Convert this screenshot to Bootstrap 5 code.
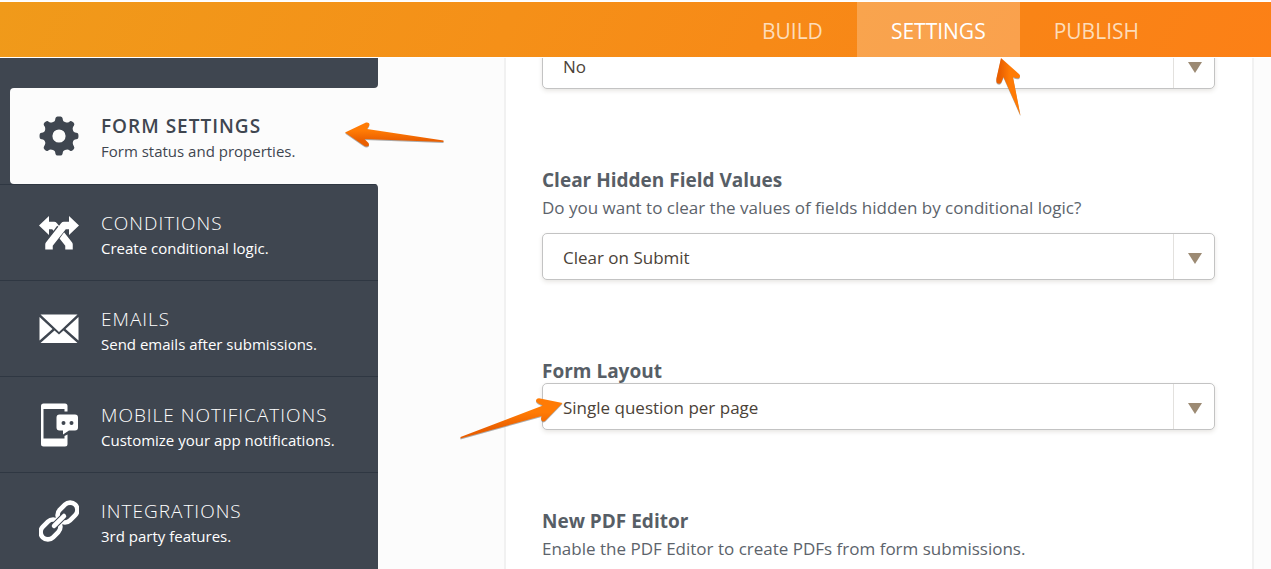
<!DOCTYPE html>
<html lang="en">
<head>
<meta charset="utf-8">
<meta name="viewport" content="width=device-width, initial-scale=1">
<title>Form Settings</title>
<link href="https://cdn.jsdelivr.net/npm/bootstrap@5.3.0/dist/css/bootstrap.min.css" rel="stylesheet">
<style>
:root { --slate: #3f4650; --paper: #fcfcfc; }
body { font-family: "Open Sans", "Noto Sans", sans-serif; background: var(--paper); overflow: hidden; }
.topbar { margin-top: 2px; height: 55px; padding-right: 98px; background: linear-gradient(115deg, #f09a1a, #f59018 40%, #f98416 80%, #fc8016); box-shadow: 0 0 0 1px #fff; z-index: 5; }
.tab-link { padding: 4px 34px 0; font-size: 21px; line-height: 51px; color: #fddcb9; text-decoration: none; white-space: nowrap; }
.tab-link.active { color: #fff; background: rgba(255,255,255,.24); }
.page-row { margin-top: 1px; height: calc(100vh - 58px); }
.side { width: 378px; }
.side-cap { height: 30px; background: var(--slate); border-bottom-right-radius: 4px; }
.side-current { background: linear-gradient(90deg, var(--slate) 50%, var(--paper) 50%); padding-left: 10px; }
.side-rest { background: var(--slate); border-top-right-radius: 4px; overflow: hidden; }
.side-item { height: 96px; padding-left: 39px; gap: 22px; color: #fff; text-decoration: none; border-top: 1px solid #2f3742; }
.side-item svg { flex: none; width: 40px; }
.side-current .side-item { padding-left: 29px; color: var(--slate); background: var(--paper); border: 0; border-radius: 4px 0 0 4px; }
.item-title { font-size: 19px; line-height: 26px; font-weight: 300; letter-spacing: 1px; text-transform: uppercase; }
.side-current .item-title { font-weight: 600; }
.item-note { font-size: 15px; line-height: 24px; }
.side-text { white-space: nowrap; padding-top: 4px; }
.main-area { padding: 0 17px 0 126px; }
.panel { border: solid #f1f1f1; border-width: 0 2px; background: #fff; padding: 0 37px 0 36px; margin-top: -16px; min-height: calc(100% + 16px); }
.field { margin-bottom: 79px; }
.field:last-child { margin-bottom: 0; }
.field-label { display: block; font-size: 19px; line-height: 24px; font-weight: 700; color: #575e66; }
.field-note { font-size: 17px; line-height: 28px; color: #5c636b; margin: 2px 0 11px; }
.field-note:last-child { margin-bottom: 0; }
.picker { height: 47px; padding: 2px 60px 0 20px; font-size: 17px; color: #4b4238; border: 1px solid #c3c3c3; border-radius: 5px; box-shadow: 0 2px 4px rgba(90,80,60,.14);
  background: url("data:image/svg+xml,%3Csvg xmlns='http://www.w3.org/2000/svg' width='41' height='45'%3E%3Cpath d='M.5 0V45' stroke='%23e3e1de'/%3E%3Cpath d='M15 19H29L22 30Z' fill='%239c8a73'/%3E%3C/svg%3E") right center / 41px 45px no-repeat #fff; }
.pointer { position: absolute; overflow: visible; pointer-events: none; z-index: 6; filter: drop-shadow(0 1px 0 #77777799); }
.pointer-side { left: 345px; top: 34px; }
.pointer-tab { right: -1px; top: 56px; }
.pointer-field { left: -82px; bottom: -9px; }
</style>
</head>
<body>
<svg width="0" height="0" class="position-absolute" aria-hidden="true">
  <defs><linearGradient id="flame" x1="0" y1="0" x2="0" y2="1"><stop offset=".35" stop-color="#ff7b05"/><stop offset=".75" stop-color="#ea5f00"/></linearGradient>
  <linearGradient id="flame-across" x1="0" y1="0" x2="1" y2="0"><stop offset=".15" stop-color="#ea5f00"/><stop offset=".55" stop-color="#ff7b05"/></linearGradient></defs>
</svg>
<header class="topbar position-relative">
  <nav class="d-flex justify-content-end" aria-label="Form">
    <a class="tab-link" href="#build">BUILD</a>
    <a class="tab-link active position-relative" href="#settings" aria-current="page">SETTINGS
      <svg class="pointer pointer-tab" width="25" height="58" aria-hidden="true"><path d="M5 0L23 16Q25 18 23 20Q21 21 17 19L24.500 57.500L7.500 19L5.500 24Q4 27 1 25Q0 24 .5 20Z" fill="url(#flame-across)"/></svg>
    </a>
    <a class="tab-link" href="#publish">PUBLISH</a>
  </nav>
</header>
<div class="page-row d-flex">
  <nav class="side d-flex flex-column flex-shrink-0" aria-label="Settings">
    <div class="side-cap flex-shrink-0"></div>
    <div class="side-current position-relative">
      <a class="side-item d-flex align-items-center" href="#form" aria-current="page">
        <svg viewBox="0 0 40 40" height="40" fill="currentColor" aria-hidden="true"><path fill-rule="evenodd" d="M16.500 2Q17 .5 18.500 .5H21.500Q23 .5 23.500 2L24 4.500Q24.500 5.500 26 6Q28.500 7 30 6L31.500 5Q32.500 4.500 34.500 6.500Q36 8 35 9.500L34 11Q33.300 12.500 34 14.500Q34.500 16 36 16.500L38.500 17Q39.500 17.500 39.500 20T38.500 23L36 23.500Q34.500 24 34 25.500T34 28.500L35 30.500Q36 32 34.500 33.500Q32.500 35.500 31.500 35L29.500 33.700Q28 33 26 34Q24.500 34.500 24 35.500L23.500 38Q23 39.500 21.500 39.500H18.500Q17 39.500 16.500 38L16 35.500Q15.500 34.500 14 34Q12 33 10.500 33.700L8.500 35Q7.500 35.500 5.500 33.500Q4 32 5 30.500L6 28.500Q6.700 27 6 25.500T4 23.500L1.500 23Q.5 22.500 .5 20T1.500 17L4 16.500Q5.500 16 6 14.500T6 11L5 9.500Q4 8 5.500 6.500Q7.500 4.500 8.500 5L10.500 6.300Q12 7 14 6Q15.500 5.500 16 4.500ZM20 13.400A6.600 6.600 0 1 0 20 26.600A6.600 6.600 0 1 0 20 13.400Z"/></svg>
        <span class="side-text"><span class="item-title d-block">Form Settings</span><span class="item-note d-block">Form status and properties.</span></span>
      </a>
      <svg class="pointer pointer-side" width="99" height="25" aria-hidden="true"><path d="M0 10.500L21 .5Q24 0 24.500 2Q24.500 4 22 7L98.500 18.500V20L19.500 17L23.500 21Q25 24 22 24.500Q20 24.500 18 23Z" fill="url(#flame)"/></svg>
    </div>
    <div class="side-rest flex-grow-1">
      <a class="side-item d-flex align-items-center" href="#conditions">
        <svg viewBox="0 0 40 34" height="34" fill="none" stroke="currentColor" stroke-width="7.500" stroke-linejoin="round" aria-hidden="true"><path d="M9 9.500H15L30 28.500V33.500"/><path d="M14 23.500L22 12.500" stroke="#3f4650" stroke-width="9.500"/><path d="M10 33.500V28.500L25 9.500H31"/><path d="M0 9.500L10 0V19ZM40 9.500L30 0V19Z" fill="currentColor" stroke="none"/></svg>
        <span class="side-text"><span class="item-title d-block">Conditions</span><span class="item-note d-block">Create conditional logic.</span></span>
      </a>
      <a class="side-item d-flex align-items-center" href="#emails">
        <svg viewBox="0 0 40 30" height="30" fill="currentColor" aria-hidden="true"><path d="M1.500 .5H38.500L20 18ZM.5 3L13.500 15L.5 26.500ZM39.500 3L26.500 15L39.500 26.500ZM15.500 16.500L20 20.500L24.500 16.500L38.500 29H1.500Z"/></svg>
        <span class="side-text"><span class="item-title d-block">Emails</span><span class="item-note d-block">Send emails after submissions.</span></span>
      </a>
      <a class="side-item d-flex align-items-center" href="#mobile">
        <svg viewBox="0 0 40 44" height="44" fill="currentColor" aria-hidden="true"><path fill-rule="evenodd" d="M4.500 .5H26Q28.500 .5 28.500 3V8.500H25.500V6H4.500V35.500H25.500V33L28.500 31.500V41Q28.500 43.500 26 43.500H4.500Q2 43.500 2 41V3Q2 .5 4.500 .5Z"/><path fill-rule="evenodd" d="M20.500 11.500H36Q39 11.500 39 14.500V24.500Q39 27.500 36 27.500H30L24 31.500V27.500H20.500Q17.500 27.500 17.500 24.500V14.500Q17.500 11.500 20.500 11.500ZM24.500 18A2 2 0 1 0 24.500 22A2 2 0 1 0 24.500 18ZM32.500 18A2 2 0 1 0 32.500 22A2 2 0 1 0 32.500 18Z"/></svg>
        <span class="side-text"><span class="item-title d-block">Mobile Notifications</span><span class="item-note d-block">Customize your app notifications.</span></span>
      </a>
      <a class="side-item d-flex align-items-center" href="#integrations">
        <svg viewBox="0 0 40 42" height="42" fill="none" stroke="currentColor" aria-hidden="true"><g transform="rotate(-45 20 21)"><rect x="-3" y="13.700" width="22" height="14.600" rx="7.300" stroke-width="4.600"/><rect x="21" y="13.700" width="22" height="14.600" rx="7.300" stroke-width="4.600"/><path d="M13.500 21H26.500" stroke="#3f4650" stroke-width="6.500" stroke-linecap="round"/><path d="M13 21H27" stroke-width="4.600" stroke-linecap="round"/></g></svg>
        <span class="side-text"><span class="item-title d-block">Integrations</span><span class="item-note d-block">3rd party features.</span></span>
      </a>
    </div>
  </nav>
  <main class="main-area flex-grow-1">
    <form class="panel">
      <div class="field">
        <select class="picker form-select" aria-label="Setting"><option>No</option><option>Yes</option></select>
      </div>
      <div class="field">
        <label class="field-label" for="clear-hidden">Clear Hidden Field Values</label>
        <p class="field-note">Do you want to clear the values of fields hidden by conditional logic?</p>
        <select class="picker form-select" id="clear-hidden"><option>Clear on Submit</option></select>
      </div>
      <div class="field position-relative">
        <label class="field-label" for="form-layout">Form Layout</label>
        <select class="picker form-select" id="form-layout"><option>Single question per page</option></select>
        <svg class="pointer pointer-field" width="103" height="41" aria-hidden="true"><path d="M102.500 5L79 .2Q76 .5 76 3Q76.500 5 83 7.500L.5 39V40.500L81.500 18L81 21Q82 25 85.500 22.500Z" fill="url(#flame)"/></svg>
      </div>
      <div class="field">
        <span class="field-label">New PDF Editor</span>
        <p class="field-note">Enable the PDF Editor to create PDFs from form submissions.</p>
      </div>
    </form>
  </main>
</div>
<script src="https://cdn.jsdelivr.net/npm/bootstrap@5.3.0/dist/js/bootstrap.bundle.min.js"></script>
</body>
</html>
